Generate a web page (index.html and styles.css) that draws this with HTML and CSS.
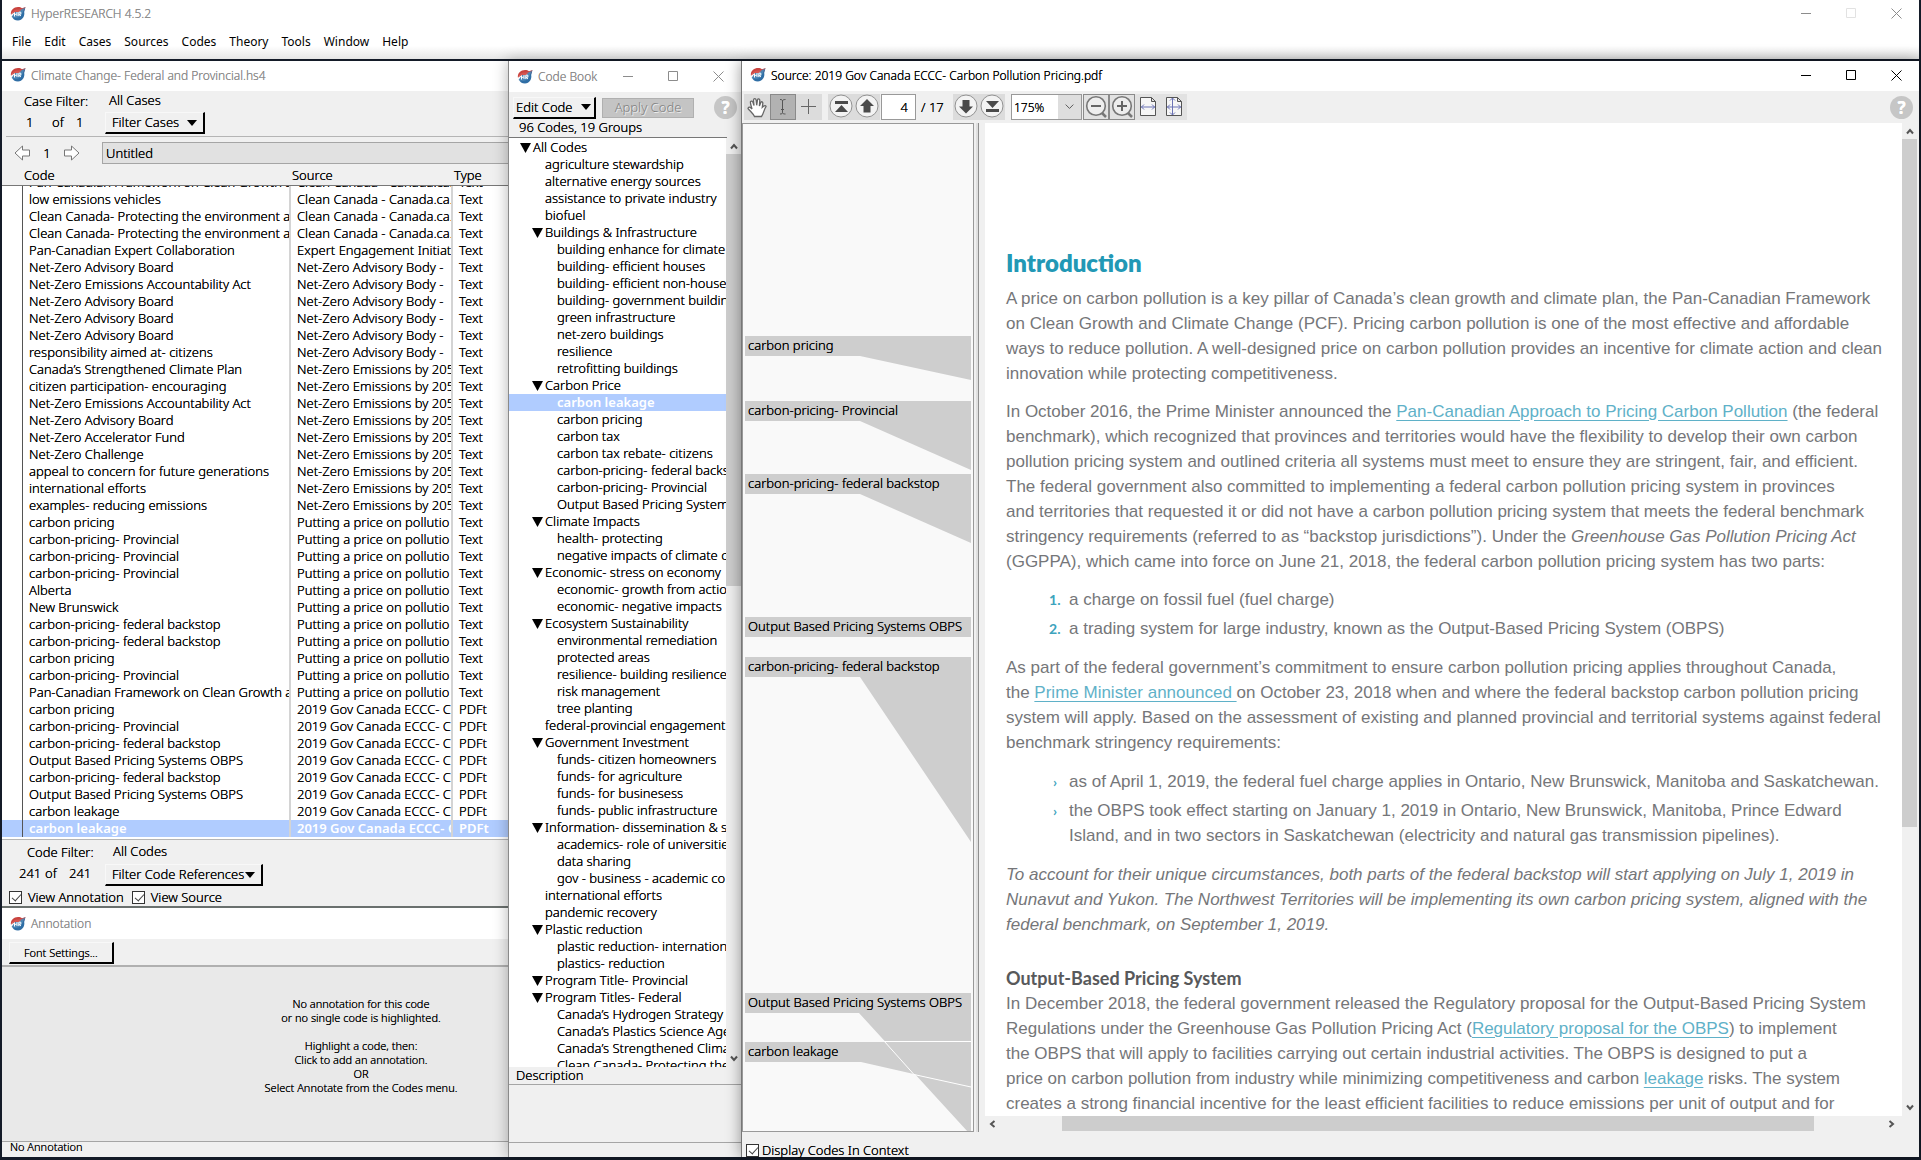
FILE: index.html
```
<!DOCTYPE html>
<html lang="en">
<head>
<meta charset="UTF-8">
<title>HyperRESEARCH 4.5.2</title>
<link rel="stylesheet" href="styles.css">
</head>
<body>

<!-- shared icons -->
<svg class="sprite" aria-hidden="true">
  <symbol id="logo" viewBox="0 0 16 16">
    <path d="M1 9C0 4 4 1 8 1c2 0 3 .6 4 1.200L15.500 1l-2 5.500H2.500z" fill="#c9433f"/>
    <path d="M15.500 1l-1.300 5c.8 4-1.700 8.500-6.200 8.500-3 0-5.500-1.500-6-4.500l5 1 4-3z" fill="#2f6ea5"/>
    <path d="M1.500 11c3 1.500 8 1 10-2l3.500-8C13 4 8 3 5 6z" fill="#4c86b5"/>
    <path d="M2 8c0-3 3-5 7-4.500L12 3 9 6 5 6z" fill="#d5554f"/>
    <path d="M4.500 6.500v4M7 6v4M4.500 8.500L7 8M8.800 10V6.200h2v2h-2l2.200 1.800" fill="none" stroke="#fff"/>
  </symbol>
  <symbol id="min" viewBox="0 0 11 11"><path d="M0 5.500h10" stroke="currentColor"/></symbol>
  <symbol id="max" viewBox="0 0 11 11"><path d="M.5.5h9v9h-9z" fill="none" stroke="currentColor"/></symbol>
  <symbol id="close" viewBox="0 0 11 11"><path d="M.5.5l10 10M10.500.5l-10 10" stroke="currentColor"/></symbol>
  <symbol id="chev" viewBox="0 0 8 8"><path d="M1 5.500l3-3.500 3 3.500" fill="none" stroke="#555" stroke-width="2"/></symbol>
  <symbol id="tri" viewBox="0 0 10 6"><path d="M0 0h10L5 6z"/></symbol>
  <symbol id="bigtri" viewBox="0 0 11 10"><path d="M0 0h11L5.500 10z"/></symbol>
  <symbol id="disc" viewBox="0 0 24 24"><circle cx="12" cy="12" r="11" fill="#f3f3f3" stroke="#929292"/></symbol>
</svg>

<header class="app-bar">
  <div class="titlebar inactive">
    <svg class="logo"><use href="#logo"/></svg>
    <span class="title">HyperRESEARCH 4.5.2</span>
    <div class="win-buttons">
      <button aria-label="Minimize"><svg><use href="#min"/></svg></button>
      <button aria-label="Maximize" disabled><svg><use href="#max"/></svg></button>
      <button aria-label="Close"><svg><use href="#close"/></svg></button>
    </div>
  </div>
  <nav class="menu">
    <button>File</button><button>Edit</button><button>Cases</button><button>Sources</button><button>Codes</button><button>Theory</button><button>Tools</button><button>Window</button><button>Help</button>
  </nav>
</header>

<main class="desktop">

  <div class="left">
    <section class="window study">
      <div class="titlebar inactive">
        <svg class="logo"><use href="#logo"/></svg>
        <span class="title">Climate Change- Federal and Provincial.hs4</span>
      </div>
      <div class="filter">
        <div class="filter-count">
          <div>Case Filter:</div>
          <div class="count"><span>1</span><span>of</span><span>1</span></div>
        </div>
        <div class="filter-pick">
          <div>All Cases</div>
          <button class="btn">Filter Cases<svg class="tri"><use href="#tri"/></svg></button>
        </div>
      </div>
      <div class="case-nav">
        <button class="arrow" aria-label="Previous case"><svg viewBox="0 0 17 16"><path d="M8.500 1v4h7v6h-7v4L1 8z" fill="#fff" stroke="#777"/></svg></button>
        <span>1</span>
        <button class="arrow" aria-label="Next case"><svg viewBox="0 0 17 16"><path d="M8.500 1v4h-7v6h7v4L16 8z" fill="#fff" stroke="#777"/></svg></button>
        <input class="case-name" type="text" value="Untitled" aria-label="Case name">
      </div>
      <div class="refs">
        <table>
          <colgroup><col class="c-mark"><col class="c-code"><col class="c-source"><col></colgroup>
          <thead><tr><th></th><th>Code</th><th>Source</th><th>Type</th></tr></thead>
          <tbody>
            <tr class="cut"><td></td><td><div>Pan-Canadian Framework on Clean Growth a</div></td><td><div>Clean Canada - Canada.ca.</div></td><td><div>Text</div></td></tr>
            <tr><td></td><td>low emissions vehicles</td><td>Clean Canada - Canada.ca.</td><td>Text</td></tr>
            <tr><td></td><td>Clean Canada- Protecting the environment a</td><td>Clean Canada - Canada.ca.</td><td>Text</td></tr>
            <tr><td></td><td>Clean Canada- Protecting the environment a</td><td>Clean Canada - Canada.ca.</td><td>Text</td></tr>
            <tr><td></td><td>Pan-Canadian Expert Collaboration</td><td>Expert Engagement Initiat</td><td>Text</td></tr>
            <tr><td></td><td>Net-Zero Advisory Board</td><td>Net-Zero Advisory Body -</td><td>Text</td></tr>
            <tr><td></td><td>Net-Zero Emissions Accountability Act</td><td>Net-Zero Advisory Body -</td><td>Text</td></tr>
            <tr><td></td><td>Net-Zero Advisory Board</td><td>Net-Zero Advisory Body -</td><td>Text</td></tr>
            <tr><td></td><td>Net-Zero Advisory Board</td><td>Net-Zero Advisory Body -</td><td>Text</td></tr>
            <tr><td></td><td>Net-Zero Advisory Board</td><td>Net-Zero Advisory Body -</td><td>Text</td></tr>
            <tr><td></td><td>responsibility aimed at- citizens</td><td>Net-Zero Advisory Body -</td><td>Text</td></tr>
            <tr><td></td><td>Canada’s Strengthened Climate Plan</td><td>Net-Zero Emissions by 205</td><td>Text</td></tr>
            <tr><td></td><td>citizen participation- encouraging</td><td>Net-Zero Emissions by 205</td><td>Text</td></tr>
            <tr><td></td><td>Net-Zero Emissions Accountability Act</td><td>Net-Zero Emissions by 205</td><td>Text</td></tr>
            <tr><td></td><td>Net-Zero Advisory Board</td><td>Net-Zero Emissions by 205</td><td>Text</td></tr>
            <tr><td></td><td>Net-Zero Accelerator Fund</td><td>Net-Zero Emissions by 205</td><td>Text</td></tr>
            <tr><td></td><td>Net-Zero Challenge</td><td>Net-Zero Emissions by 205</td><td>Text</td></tr>
            <tr><td></td><td>appeal to concern for future generations</td><td>Net-Zero Emissions by 205</td><td>Text</td></tr>
            <tr><td></td><td>international efforts</td><td>Net-Zero Emissions by 205</td><td>Text</td></tr>
            <tr><td></td><td>examples- reducing emissions</td><td>Net-Zero Emissions by 205</td><td>Text</td></tr>
            <tr><td></td><td>carbon pricing</td><td>Putting a price on pollutio</td><td>Text</td></tr>
            <tr><td></td><td>carbon-pricing- Provincial</td><td>Putting a price on pollutio</td><td>Text</td></tr>
            <tr><td></td><td>carbon-pricing- Provincial</td><td>Putting a price on pollutio</td><td>Text</td></tr>
            <tr><td></td><td>carbon-pricing- Provincial</td><td>Putting a price on pollutio</td><td>Text</td></tr>
            <tr><td></td><td>Alberta</td><td>Putting a price on pollutio</td><td>Text</td></tr>
            <tr><td></td><td>New Brunswick</td><td>Putting a price on pollutio</td><td>Text</td></tr>
            <tr><td></td><td>carbon-pricing- federal backstop</td><td>Putting a price on pollutio</td><td>Text</td></tr>
            <tr><td></td><td>carbon-pricing- federal backstop</td><td>Putting a price on pollutio</td><td>Text</td></tr>
            <tr><td></td><td>carbon pricing</td><td>Putting a price on pollutio</td><td>Text</td></tr>
            <tr><td></td><td>carbon-pricing- Provincial</td><td>Putting a price on pollutio</td><td>Text</td></tr>
            <tr><td></td><td>Pan-Canadian Framework on Clean Growth a</td><td>Putting a price on pollutio</td><td>Text</td></tr>
            <tr><td></td><td>carbon pricing</td><td>2019 Gov Canada ECCC- Ca</td><td>PDFt</td></tr>
            <tr><td></td><td>carbon-pricing- Provincial</td><td>2019 Gov Canada ECCC- Ca</td><td>PDFt</td></tr>
            <tr><td></td><td>carbon-pricing- federal backstop</td><td>2019 Gov Canada ECCC- Ca</td><td>PDFt</td></tr>
            <tr><td></td><td>Output Based Pricing Systems OBPS</td><td>2019 Gov Canada ECCC- Ca</td><td>PDFt</td></tr>
            <tr><td></td><td>carbon-pricing- federal backstop</td><td>2019 Gov Canada ECCC- Ca</td><td>PDFt</td></tr>
            <tr><td></td><td>Output Based Pricing Systems OBPS</td><td>2019 Gov Canada ECCC- Ca</td><td>PDFt</td></tr>
            <tr><td></td><td>carbon leakage</td><td>2019 Gov Canada ECCC- Ca</td><td>PDFt</td></tr>
            <tr class="selected"><td></td><td>carbon leakage</td><td>2019 Gov Canada ECCC- Ca</td><td>PDFt</td></tr>
          </tbody>
        </table>
      </div>
      <div class="filter code-filter">
        <div class="filter-count">
          <div>Code Filter:</div>
          <div class="count"><span>241</span><span>of</span><span>241</span></div>
        </div>
        <div class="filter-pick">
          <div>All Codes</div>
          <button class="btn">Filter Code References<svg class="tri"><use href="#tri"/></svg></button>
        </div>
      </div>
      <div class="views">
        <label><input type="checkbox" checked>View Annotation</label>
        <label><input type="checkbox" checked>View Source</label>
      </div>
    </section>

    <section class="window annotation">
      <div class="titlebar inactive">
        <svg class="logo"><use href="#logo"/></svg>
        <span class="title">Annotation</span>
      </div>
      <div class="font-bar"><button class="btn small">Font Settings...</button></div>
      <div class="note">
        <p>No annotation for this code<br>or no single code is highlighted.</p>
        <p>Highlight a code, then:<br>Click to add an annotation.<br>OR<br>Select Annotate from the Codes menu.</p>
      </div>
      <div class="status">No Annotation</div>
    </section>
  </div>

  <section class="window codebook">
    <div class="titlebar inactive">
      <svg class="logo"><use href="#logo"/></svg>
      <span class="title">Code Book</span>
      <div class="win-buttons">
        <button aria-label="Minimize"><svg><use href="#min"/></svg></button>
        <button aria-label="Maximize"><svg><use href="#max"/></svg></button>
        <button aria-label="Close"><svg><use href="#close"/></svg></button>
      </div>
    </div>
    <div class="code-tools">
      <button class="btn">Edit Code<svg class="tri"><use href="#tri"/></svg></button>
      <button class="btn-off" disabled>Apply Code</button>
      <button class="help" aria-label="Help">?</button>
    </div>
    <div class="code-count">96 Codes, 19 Groups</div>
    <div class="tree-wrap">
      <ul class="tree">
        <li class="group l0"><svg><use href="#bigtri"/></svg>All Codes</li>
        <li class="l1">agriculture stewardship</li>
        <li class="l1">alternative energy sources</li>
        <li class="l1">assistance to private industry</li>
        <li class="l1">biofuel</li>
        <li class="group l1"><svg><use href="#bigtri"/></svg>Buildings &amp; Infrastructure</li>
        <li class="l2">building enhance for climate</li>
        <li class="l2">building- efficient houses</li>
        <li class="l2">building- efficient non-house</li>
        <li class="l2">building- government buildin</li>
        <li class="l2">green infrastructure</li>
        <li class="l2">net-zero buildings</li>
        <li class="l2">resilience</li>
        <li class="l2">retrofitting buildings</li>
        <li class="group l1"><svg><use href="#bigtri"/></svg>Carbon Price</li>
        <li class="l2 selected">carbon leakage</li>
        <li class="l2">carbon pricing</li>
        <li class="l2">carbon tax</li>
        <li class="l2">carbon tax rebate- citizens</li>
        <li class="l2">carbon-pricing- federal backs</li>
        <li class="l2">carbon-pricing- Provincial</li>
        <li class="l2">Output Based Pricing System</li>
        <li class="group l1"><svg><use href="#bigtri"/></svg>Climate Impacts</li>
        <li class="l2">health- protecting</li>
        <li class="l2">negative impacts of climate c</li>
        <li class="group l1"><svg><use href="#bigtri"/></svg>Economic- stress on economy</li>
        <li class="l2">economic- growth from actio</li>
        <li class="l2">economic- negative impacts</li>
        <li class="group l1"><svg><use href="#bigtri"/></svg>Ecosystem Sustainability</li>
        <li class="l2">environmental remediation</li>
        <li class="l2">protected areas</li>
        <li class="l2">resilience- building resilience</li>
        <li class="l2">risk management</li>
        <li class="l2">tree planting</li>
        <li class="l1">federal-provincial engagement</li>
        <li class="group l1"><svg><use href="#bigtri"/></svg>Government Investment</li>
        <li class="l2">funds- citizen homeowners</li>
        <li class="l2">funds- for agriculture</li>
        <li class="l2">funds- for businesess</li>
        <li class="l2">funds- public infrastructure</li>
        <li class="group l1"><svg><use href="#bigtri"/></svg>Information- dissemination &amp; s</li>
        <li class="l2">academics- role of universitie</li>
        <li class="l2">data sharing</li>
        <li class="l2">gov - business - academic co</li>
        <li class="l1">international efforts</li>
        <li class="l1">pandemic recovery</li>
        <li class="group l1"><svg><use href="#bigtri"/></svg>Plastic reduction</li>
        <li class="l2">plastic reduction- internation</li>
        <li class="l2">plastics- reduction</li>
        <li class="group l1"><svg><use href="#bigtri"/></svg>Program Title- Provincial</li>
        <li class="group l1"><svg><use href="#bigtri"/></svg>Program Titles- Federal</li>
        <li class="l2">Canada’s Hydrogen Strategy</li>
        <li class="l2">Canada’s Plastics Science Age</li>
        <li class="l2">Canada’s Strengthened Clima</li>
        <li class="l2">Clean Canada- Protecting the</li>
      </ul>
      <div class="scroll-v">
        <svg class="chev"><use href="#chev"/></svg>
        <div class="thumb"></div>
        <svg class="chev down"><use href="#chev"/></svg>
      </div>
    </div>
    <div class="desc-head">Description</div>
    <div class="desc"></div>
  </section>

  <section class="window source">
    <div class="titlebar">
      <svg class="logo"><use href="#logo"/></svg>
      <span class="title">Source: 2019 Gov Canada ECCC- Carbon Pollution Pricing.pdf</span>
      <div class="win-buttons">
        <button aria-label="Minimize"><svg><use href="#min"/></svg></button>
        <button aria-label="Maximize"><svg><use href="#max"/></svg></button>
        <button aria-label="Close"><svg><use href="#close"/></svg></button>
      </div>
    </div>

    <div class="toolbar">
      <div class="tools">
        <button aria-label="Pan"><svg viewBox="0 0 26 26"><path d="M10.500 22.500c-1-2.500-4-5-6.500-8 .3-2 2-1.800 4 .5-.8-3-2-6-1.500-7.300.8-1.200 2-.6 2.500.8l1 3-.5-5.500c.2-1.800 2.300-1.800 2.600 0l.6 5.300.8-5.500c.4-1.500 2.300-1.200 2.300.4l-.4 5.800 1.400-3.500c.7-1.300 2.200-.6 2 .8l-.5 4c2-2 4-2 3.700-.6-2 2.600-2.500 7.300-4.500 9.800z" fill="#fff" stroke="#666" stroke-width="1.300"/></svg></button>
        <button class="pressed" aria-label="Select text"><svg viewBox="0 0 26 26"><path d="M10 5.500c2 0 2.500.5 2.500 1.500v11.500c0 1-.5 1.500-2.500 1.500M15.500 5.500c-2 0-3 .5-3 1.500M12.500 18.500c0 1 1 1.500 3 1.500M11 15.500h3" fill="none" stroke="#555"/></svg></button>
        <button aria-label="Select area"><svg viewBox="0 0 26 26"><path d="M5 12.500h15M12.500 5v15" stroke="#666"/></svg></button>
      </div>
      <div class="tools">
        <button aria-label="First page"><svg viewBox="0 0 26 26"><use href="#disc" x="1" y="0" width="24" height="24"/><path d="M7 7h13v3H7zM13.500 11l6.500 7H7z" fill="#4a4a4a"/></svg></button>
        <button aria-label="Previous page"><svg viewBox="0 0 26 26"><use href="#disc" x="1" y="0" width="24" height="24"/><path d="M13 5l7 7h-3.500v6.500h-7V12H6z" fill="#4a4a4a"/></svg></button>
      </div>
      <input class="page" type="text" value="4" aria-label="Page">
      <span class="pages">/ 17</span>
      <div class="tools">
        <button aria-label="Next page"><svg viewBox="0 0 26 26"><use href="#disc" x="1" y="0" width="24" height="24"/><path d="M13 19.500l7-7h-3.500V6h-7v6.500H6z" fill="#4a4a4a"/></svg></button>
        <button aria-label="Last page"><svg viewBox="0 0 26 26"><use href="#disc" x="1" y="0" width="24" height="24"/><path d="M7 15h13v3H7zM13.500 14L7 7h13z" fill="#4a4a4a"/></svg></button>
      </div>
      <div class="zoom">
        <select aria-label="Zoom"><option>175%</option></select>
        <svg viewBox="0 0 24 24"><path d="M8 9.500l4 4 4-4" fill="none" stroke="#555"/></svg>
      </div>
      <div class="tools fit">
        <button class="framed" aria-label="Zoom out"><svg viewBox="0 0 26 26"><circle cx="13" cy="12" r="9.300" fill="#eee" stroke="#777" stroke-width="1.600"/><path d="M8 12h10" stroke="#666" stroke-width="2"/><path d="M19 19l4 4" stroke="#777" stroke-width="2.500"/></svg></button>
        <button class="framed" aria-label="Zoom in"><svg viewBox="0 0 26 26"><circle cx="13" cy="12" r="9.300" fill="#eee" stroke="#777" stroke-width="1.600"/><path d="M8 12h10M13 7v10" stroke="#666" stroke-width="2"/><path d="M19 19l4 4" stroke="#777" stroke-width="2.500"/></svg></button>
        <button aria-label="Fit width"><svg viewBox="0 0 26 26"><path d="M5.500 3.500h11l4 4v14h-15zM16.500 3.500v4h4" fill="#f6f6f6" stroke="#555"/><path d="M6 13h14M9 10.500L6.500 13 9 15.500M17 10.500l2.500 2.500-2.500 2.500" fill="none" stroke="#6b73b5"/></svg></button>
        <button aria-label="Fit page"><svg viewBox="0 0 26 26"><path d="M5.500 3.500h11l4 4v14h-15zM16.500 3.500v4h4" fill="#f6f6f6" stroke="#555"/><path d="M6 13h14M9 10.500L6.500 13 9 15.500M17 10.500l2.500 2.500-2.500 2.500M11.500 4v17M9 6.500L11.500 4 14 6.500M9 18.500l2.500 2.500 2.500-2.500" fill="none" stroke="#6b73b5"/></svg></button>
      </div>
      <button class="help" aria-label="Help">?</button>
    </div>

    <div class="viewer">
      <!-- code markers: label on the left, flared out to the coded span -->
      <svg class="context" viewBox="743 124 230 1008" preserveAspectRatio="xMinYMin slice">
        <g fill="#cecece">
          <path d="M745 336h226v44l-111-24H745z"/>
          <path d="M745 401h226v69l-111-49H745z"/>
          <path d="M745 474h226v69l-111-49H745z"/>
          <path d="M745 617h226v20H745z"/>
          <path d="M745 657h226v185l-111-165H745z"/>
          <path d="M745 993h226v139h-3L859 1013H745z"/>
          <path d="M745 1042h226v45l-110-25H745z"/>
        </g>
        <path d="M884 1041.500h87M884 1041l30 33.500M914 1074.500l57 12.500" fill="none" stroke="#fff"/>
        <g class="labels">
          <text x="748" y="350">carbon pricing</text>
          <text x="748" y="415">carbon-pricing- Provincial</text>
          <text x="748" y="488">carbon-pricing- federal backstop</text>
          <text x="748" y="631">Output Based Pricing Systems OBPS</text>
          <text x="748" y="671">carbon-pricing- federal backstop</text>
          <text x="748" y="1007">Output Based Pricing Systems OBPS</text>
          <text x="748" y="1056">carbon leakage</text>
        </g>
      </svg>
      <div class="splitter"></div>
      <div class="doc-wrap">
        <div class="doc-row">
          <article class="doc">
            <h1>Introduction</h1>
            <p>A price on carbon pollution is a key pillar of Canada’s clean growth and climate plan, the Pan-Canadian Framework<br>
            on Clean Growth and Climate Change (PCF). Pricing carbon pollution is one of the most effective and affordable<br>
            ways to reduce pollution. A well-designed price on carbon pollution provides an incentive for climate action and clean<br>
            innovation while protecting competitiveness.</p>
            <p>In October 2016, the Prime Minister announced the <a href="#">Pan-Canadian Approach to Pricing Carbon Pollution</a> (the federal<br>
            benchmark), which recognized that provinces and territories would have the flexibility to develop their own carbon<br>
            pollution pricing system and outlined criteria all systems must meet to ensure they are stringent, fair, and efficient.<br>
            The federal government also committed to implementing a federal carbon pollution pricing system in provinces<br>
            and territories that requested it or did not have a carbon pollution pricing system that meets the federal benchmark<br>
            stringency requirements (referred to as “backstop jurisdictions”). Under the <i>Greenhouse Gas Pollution Pricing Act</i><br>
            (GGPPA), which came into force on June 21, 2018, the federal carbon pollution pricing system has two parts:</p>
            <ol>
              <li>a charge on fossil fuel (fuel charge)</li>
              <li>a trading system for large industry, known as the Output-Based Pricing System (OBPS)</li>
            </ol>
            <p>As part of the federal government’s commitment to ensure carbon pollution pricing applies throughout Canada,<br>
            the <a href="#">Prime Minister announced </a>on October 23, 2018 when and where the federal backstop carbon pollution pricing<br>
            system will apply. Based on the assessment of existing and planned provincial and territorial systems against federal<br>
            benchmark stringency requirements:</p>
            <ul>
              <li>as of April 1, 2019, the federal fuel charge applies in Ontario, New Brunswick, Manitoba and Saskatchewan.</li>
              <li>the OBPS took effect starting on January 1, 2019 in Ontario, New Brunswick, Manitoba, Prince Edward<br>
              Island, and in two sectors in Saskatchewan (electricity and natural gas transmission pipelines).</li>
            </ul>
            <p><i>To account for their unique circumstances, both parts of the federal backstop will start applying on July 1, 2019 in<br>
            Nunavut and Yukon. The Northwest Territories will be implementing its own carbon pricing system, aligned with the<br>
            federal benchmark, on September 1, 2019.</i></p>
            <h2>Output-Based Pricing System</h2>
            <p>In December 2018, the federal government released the Regulatory proposal for the Output-Based Pricing System<br>
            Regulations under the Greenhouse Gas Pollution Pricing Act (<a href="#">Regulatory proposal for the OBPS</a>) to implement<br>
            the OBPS that will apply to facilities carrying out certain industrial activities. The OBPS is designed to put a<br>
            price on carbon pollution from industry while minimizing competitiveness and carbon <a href="#">leakage</a> risks. The system<br>
            creates a strong financial incentive for the least efficient facilities to reduce emissions per unit of output and for</p>
          </article>
          <div class="scroll-v">
            <svg class="chev"><use href="#chev"/></svg>
            <div class="thumb"></div>
            <svg class="chev down"><use href="#chev"/></svg>
          </div>
        </div>
        <div class="scroll-h">
          <svg class="chev left-arrow"><use href="#chev"/></svg>
          <div class="thumb"></div>
          <svg class="chev right-arrow"><use href="#chev"/></svg>
        </div>
      </div>
    </div>
    <div class="context-bar"><label><input type="checkbox" checked>Display Codes In Context</label></div>
  </section>

</main>
</body>
</html>
```
FILE: styles.css
```
* { box-sizing: border-box; }
body {
  margin: 0;
  height: 100vh;
  display: flex;
  flex-direction: column;
  padding: 0 2px 3px;
  overflow: hidden;
  background: #141b28;
  font: 300 13px/17px "Noto Sans", "Open Sans", sans-serif;
  color: #000;
  text-shadow: 0 0 0 currentColor;
  white-space: nowrap;
}
button, input, select { font: inherit; color: inherit; text-shadow: inherit; }
button { border: 0; background: none; padding: 0; }
svg { display: block; }
.sprite { position: absolute; width: 0; height: 0; }

/* title bars */
.app-bar {
  flex: none;
  height: 59px;
  margin-bottom: 2px;
  background: linear-gradient(#fff 46px, #e6e6e6);
}
.titlebar {
  display: flex;
  align-items: center;
  flex: none;
  height: 30px;
  padding: 0 0 2px 8px;
  background: #fff;
  font-size: 12px;
}
.app-bar .titlebar { height: 27px; padding-bottom: 0; background: none; }
.inactive { color: #8c8c8c; }
.logo { width: 16px; height: 16px; margin-right: 5px; }
.title { flex: 1; }
.win-buttons { display: flex; }
.win-buttons button {
  width: 45px;
  display: flex;
  justify-content: center;
}
.win-buttons button:disabled { color: #e2e2e2; }
.win-buttons svg { width: 11px; height: 11px; }
.menu { display: flex; padding: 6px 4px; font-size: 12px; font-weight: 400; text-shadow: none; }
.menu button { padding: 0 7px 0 6px; }

/* window layout */
.desktop {
  flex: 1;
  min-height: 0;
  display: grid;
  grid-template-columns: 506px 233px minmax(0, 1fr);
}
.window {
  display: flex;
  flex-direction: column;
  min-height: 0;
  background: #f0f0f0;
}
.left {
  display: flex;
  flex-direction: column;
  gap: 2px;
  min-height: 0;
  background: #6a706e;
}
.study { flex: 1; }
.annotation { height: 249px; }

/* raised buttons */
.btn {
  height: 22px;
  padding: 0 6px;
  display: flex;
  align-items: center;
  background: #f0f0f0;
  border: 1px solid #f8f8f8;
  border-right: 2px solid #000;
  border-bottom: 2px solid #000;
}
.tri { width: 10px; height: 6px; margin-left: 8px; }
.small { font-size: 11px; padding: 0 14px; }
.btn-off {
  height: 20px;
  width: 92px;
  background: #c4c4c4;
  border: 1px solid #b0b0b0;
  color: #808080;
  text-shadow: 1px 1px #eee;
}

/* study window */
.filter {
  flex: none;
  display: grid;
  grid-template-columns: 81px 1fr;
  height: 46px;
  margin-left: 4px;
  padding-left: 18px;
  border-bottom: 1px solid #b5b5b5;
}
.filter-count > div:first-child { padding-top: 2px; }
.filter-pick > div { padding: 1px 4px 3px; }
.count { display: flex; padding: 4px 0 0 2px; }
.count span:first-child { width: 26px; }
.count span:nth-child(2) { width: 24px; }
.code-filter { border: 0; height: 49px; padding-top: 2px; }
.code-filter .filter-count > div:first-child { padding-left: 3px; }
.code-filter .filter-pick > div { padding-left: 8px; padding-bottom: 4px; }
.code-filter .tri { margin-left: 1px; }
.code-filter .count { padding-left: 0; margin-left: -5px; }
.case-nav {
  flex: none;
  display: flex;
  align-items: center;
  height: 32px;
  padding-left: 12px;
}
.arrow { width: 17px; }
.case-nav span { width: 32px; text-align: center; }
.case-name {
  flex: 1;
  min-width: 0;
  height: 22px;
  margin-left: 22px;
  padding: 0 3px;
  background: #e1e1e1;
  border: 1px solid #a5a5a5;
  border-right: 0;
}
.refs {
  flex: 1;
  min-height: 0;
  overflow: hidden;
  background: #fff;
  border-bottom: 1px solid #b5b5b5;
}
table { width: 100%; table-layout: fixed; border-collapse: separate; border-spacing: 0; }
.c-mark { width: 21px; }
.c-code { width: 268px; }
.c-source { width: 162px; }
th {
  height: 17px;
  padding: 0 0 0 1px;
  text-align: left;
  font-weight: inherit;
  line-height: 12px;
  vertical-align: top;
  background: #f0f0f0;
  border-bottom: 1px solid #777;
}
td {
  height: 17px;
  padding: 0 0 0 6px;
  line-height: 17px;
  overflow: hidden;
  border-right: 2px solid #d4d4d4;
}
td:first-child { border-right: 1px solid #555; }
td:last-child { border-right: 0; }
.cut td { height: 5px; }
.cut div {
  height: 5px;
  display: flex;
  align-items: flex-end;
  overflow: hidden;
}
.selected { background: #b0ccff; color: #fff; font-weight: 600; text-shadow: none; }
.views { display: flex; gap: 8px; padding: 0 7px; }
label { display: flex; align-items: center; gap: 6px; }

input[type="checkbox"] {
  appearance: none;
  width: 13px;
  height: 13px;
  margin: 0;
  background: #fff;
  border: 1px solid #333;
  position: relative;
}
input[type="checkbox"]:checked::after {
  content: "";
  position: absolute;
  left: 4px;
  top: 0;
  width: 4px;
  height: 8px;
  border: solid #444;
  border-width: 0 1px 1px 0;
  transform: rotate(42deg);
}

/* annotation window */
.annotation .titlebar { height: 31px; padding-bottom: 0; }
.font-bar { padding: 3px 7px; height: 28px; border-bottom: 2px solid #b0b0b0; }
.note {
  flex: 1;
  padding: 30px 0 0 212px;
  background: #e9e9e9;
  border-bottom: 1px solid #a5a5a5;
  text-align: center;
  font-size: 11px;
  line-height: 14px;
}
.note p { margin: 0 0 14px; }
.status { height: 15px; padding-left: 8px; font-size: 11px; line-height: 10px; overflow: hidden; }

/* code book */
.codebook {
  border-left: 1px solid #8a8a8a;
  box-shadow: 0 0 14px rgba(0, 0, 0, .3);
  position: relative;
}
.codebook .titlebar { height: 31px; padding-bottom: 0; }
.code-tools {
  display: flex;
  align-items: center;
  gap: 6px;
  height: 27px;
  padding: 4px 4px 0;
}
.code-tools .btn { width: 83px; padding: 0 2px; }
.help {
  width: 23px;
  height: 23px;
  margin-left: auto;
  border-radius: 50%;
  background: #c6c6c6;
  color: #fff;
  font-size: 17px;
  font-weight: bold;
}
.code-count { height: 19px; padding-left: 10px; border-bottom: 1px solid #777; margin-right: 14px; }
.tree-wrap { flex: 1; min-height: 0; display: flex; }
.tree {
  flex: 1;
  min-width: 0;
  margin: 0;
  padding: 1px 0 0;
  list-style: none;
  overflow: hidden;
  background: #fff;
}
.tree li { display: flex; align-items: center; height: 17px; }
.tree svg { flex: none; width: 11px; height: 10px; margin: 0 2px 0 -13px; }
.l0 { padding-left: 24px; }
.l1 { padding-left: 36px; }
.l2 { padding-left: 48px; }
.desc-head { padding-left: 7px; height: 18px; border-bottom: 1px solid #a5a5a5; }
.desc { height: 58px; margin-bottom: 14px; border-bottom: 1px solid #a5a5a5; }

/* scroll bars */
.scroll-v {
  flex: none;
  width: 15px;
  display: flex;
  flex-direction: column;
  align-items: center;
  padding: 5px 0;
  background: #f0f0f0;
}
.scroll-v .thumb { width: 100%; flex: 0 0 47%; margin: 3px 0 auto; background: #cdcdcd; }
.doc-row .thumb { flex-basis: 70%; }
.chev { width: 8px; height: 8px; flex: none; }
.down { transform: rotate(180deg); }
.left-arrow { transform: rotate(-90deg); }
.right-arrow { transform: rotate(90deg); }
.scroll-h { display: flex; align-items: center; height: 15px; padding: 0 22px 0 4px; }
.scroll-h .thumb { height: 100%; flex: 0 0 83%; margin: 0 auto 0 65px; background: #cdcdcd; }

/* source window */
.source {
  border-left: 1px solid #777;
  box-shadow: 0 0 14px rgba(0, 0, 0, .4);
  position: relative;
}
.toolbar { display: flex; align-items: center; height: 32px; padding: 0 6px 0 2px; }
.tools { display: flex; margin-right: 6px; background: #dcdcdc; }
.tools button { width: 26px; height: 26px; }
.tools svg { width: 26px; height: 26px; }
.tools .pressed { background: #b2b2b2; outline: 1px solid #8a8a8a; outline-offset: -1px; }
.tools .framed { outline: 1px solid #8a8a8a; outline-offset: -1px; }
.fit { background: #e2e2e2; }
.page {
  width: 35px;
  height: 26px;
  margin-left: -5px;
  padding: 0 7px;
  border: 1px solid #999;
  background: #fff;
  text-align: right;
}
.pages { width: 37px; padding-left: 5px; }
.zoom {
  display: flex;
  width: 71px;
  height: 26px;
  margin-right: 1px;
  background: #fff;
  border: 1px solid #999;
}
.zoom select { width: 46px; border: 0; padding: 0 2px; appearance: none; background: none; font-size: 12px; }
.zoom svg { width: 23px; background: #dedede; }
.viewer { flex: 1; min-height: 0; display: flex; }
.context {
  flex: none;
  width: 232px;
  height: 100%;
  background: #f9f9f9;
  border: 1px solid #999;
}
.labels { font-size: 13px; }
.splitter {
  flex: none;
  width: 11px;
  background: linear-gradient(90deg, #f0f0f0 2px, #e0e0e0 2px 4px, #8f8f8f 4px 5px, #f0f0f0 5px);
}
.doc-wrap { flex: 1; min-width: 0; display: flex; flex-direction: column; padding: 0 2px 1px 0; }
.doc-row { flex: 1; min-height: 0; display: flex; }
.doc {
  flex: 1;
  min-width: 0;
  overflow: hidden;
  padding: 123px 0 0 21px;
  background: #fff;
  color: #757679;
  font: 17px/25px "Liberation Sans", Arial, sans-serif;
  text-shadow: none;
}
.doc h1 { margin: 0 0 7px; font: 800 24px/33px Lato, sans-serif; color: #2298b5; }
.doc h2 { margin: 29px 0 0; font: bold 18px/25px Lato, sans-serif; color: #58595b; }
.doc p { margin: 0 0 13px; }
.doc a { color: #5fb1c8; text-decoration: underline; text-underline-offset: 3px; }
.doc ol, .doc ul { margin: 0 0 14px; padding-left: 63px; list-style: none; }
.doc p + ul { margin-top: 14px; }
.doc li { margin-bottom: 4px; }
.doc li:last-child { margin-bottom: 0; }
.doc ol { counter-reset: n; }
.doc ol li::before, .doc ul li::before {
  display: inline-block;
  width: 20px;
  margin-left: -20px;
  color: #3da3bd;
  font: bold 14px Lato, sans-serif;
}
.doc ol li::before { counter-increment: n; content: counter(n) "."; }
.doc ul li::before { content: "›"; width: 16px; margin-left: -16px; }
.context-bar { height: 25px; padding: 10px 0 0 4px; }
.context-bar label { gap: 3px; }
```
